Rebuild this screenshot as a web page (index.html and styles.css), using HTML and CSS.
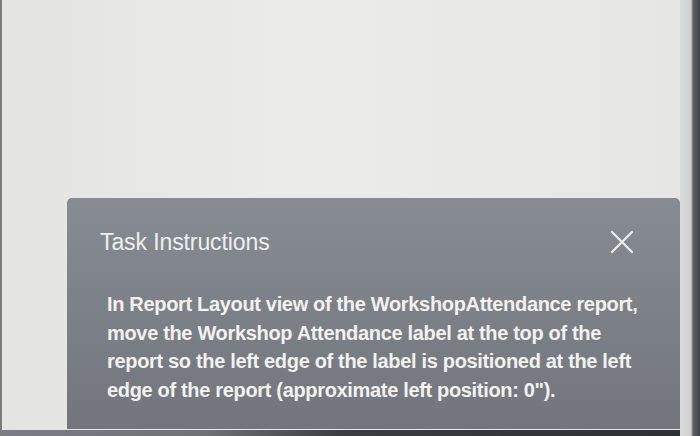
FILE: index.html
```html
<!DOCTYPE html>
<html lang="en">
<head>
  <meta charset="UTF-8">
  <meta name="viewport" content="width=device-width, initial-scale=1.0">
  <title>Task Instructions</title>
  <link rel="stylesheet" href="styles.css">
</head>
<body>
  <div class="screen">
    <div class="workspace">
      <div class="dialog">
        <div class="dialog-header">
          <h2 class="dialog-title">Task Instructions</h2>
          <button class="close" aria-label="Close">
            <svg width="24" height="24" viewBox="0 0 24 24">
              <path d="M2 2 L22 22 M22 2 L2 22" stroke="#eceeee" stroke-width="2.2" stroke-linecap="round" fill="none"/>
            </svg>
          </button>
        </div>
        <p class="dialog-text">In Report Layout view of the WorkshopAttendance report, move the Workshop Attendance label at the top of the report so the left edge of the label is positioned at the left edge of the report (approximate left position: 0").</p>
      </div>
    </div>
    <div class="bottom-bar"></div>
  </div>
  <div class="bezel"></div>
</body>
</html>
```

FILE: styles.css
```css
body {
  display: flex;
  height: 436px;
  margin: 0;
  overflow: hidden;
  background-color: #e7e7e5;
  font-family: "Liberation Sans", Arial, sans-serif;
}
.screen {
  flex: 1;
  display: flex;
  flex-direction: column;
  border-left: 2px solid #7c7d7e;
  background: linear-gradient(90deg, #e4e4e2 0%, #ebebe9 45%, #e6e6e4 100%);
}
.workspace {
  flex: 1;
  padding: 198px 0 0 65px;
}
.dialog {
  width: 613px;
  height: 231px;
  box-sizing: border-box;
  padding: 25px 33px 0 33px;
  border-radius: 5px 5px 0 0;
  background: linear-gradient(180deg, #878b92 0%, #7c8087 50%, #72767c 100%);
}
.dialog-header {
  display: flex;
  justify-content: space-between;
  align-items: center;
  height: 38px;
}
.dialog-title {
  margin: 0;
  font-size: 23px;
  font-weight: 400;
  letter-spacing: -0.1px;
  color: #eef0ef;
}
.close {
  padding: 0;
  border: 0;
  background: none;
  width: 24px;
  height: 24px;
  margin-right: 13px;
}
.dialog-text {
  margin: 29px 0 0 7px;
  font-size: 20px;
  font-weight: 700;
  line-height: 28.5px;
  letter-spacing: -0.33px;
  color: #f2f2f0;
}
.bottom-bar {
  height: 6px;
  background: linear-gradient(90deg, #7a7e84 0%, #6e7277 30%, #3a3d42 50%, #2c2f33 100%);
}
.bezel {
  width: 20px;
  background: linear-gradient(90deg, #d9dadb 0%, #cfd0d2 55%, #5c6168 65%, #3f4449 100%);
}
```
